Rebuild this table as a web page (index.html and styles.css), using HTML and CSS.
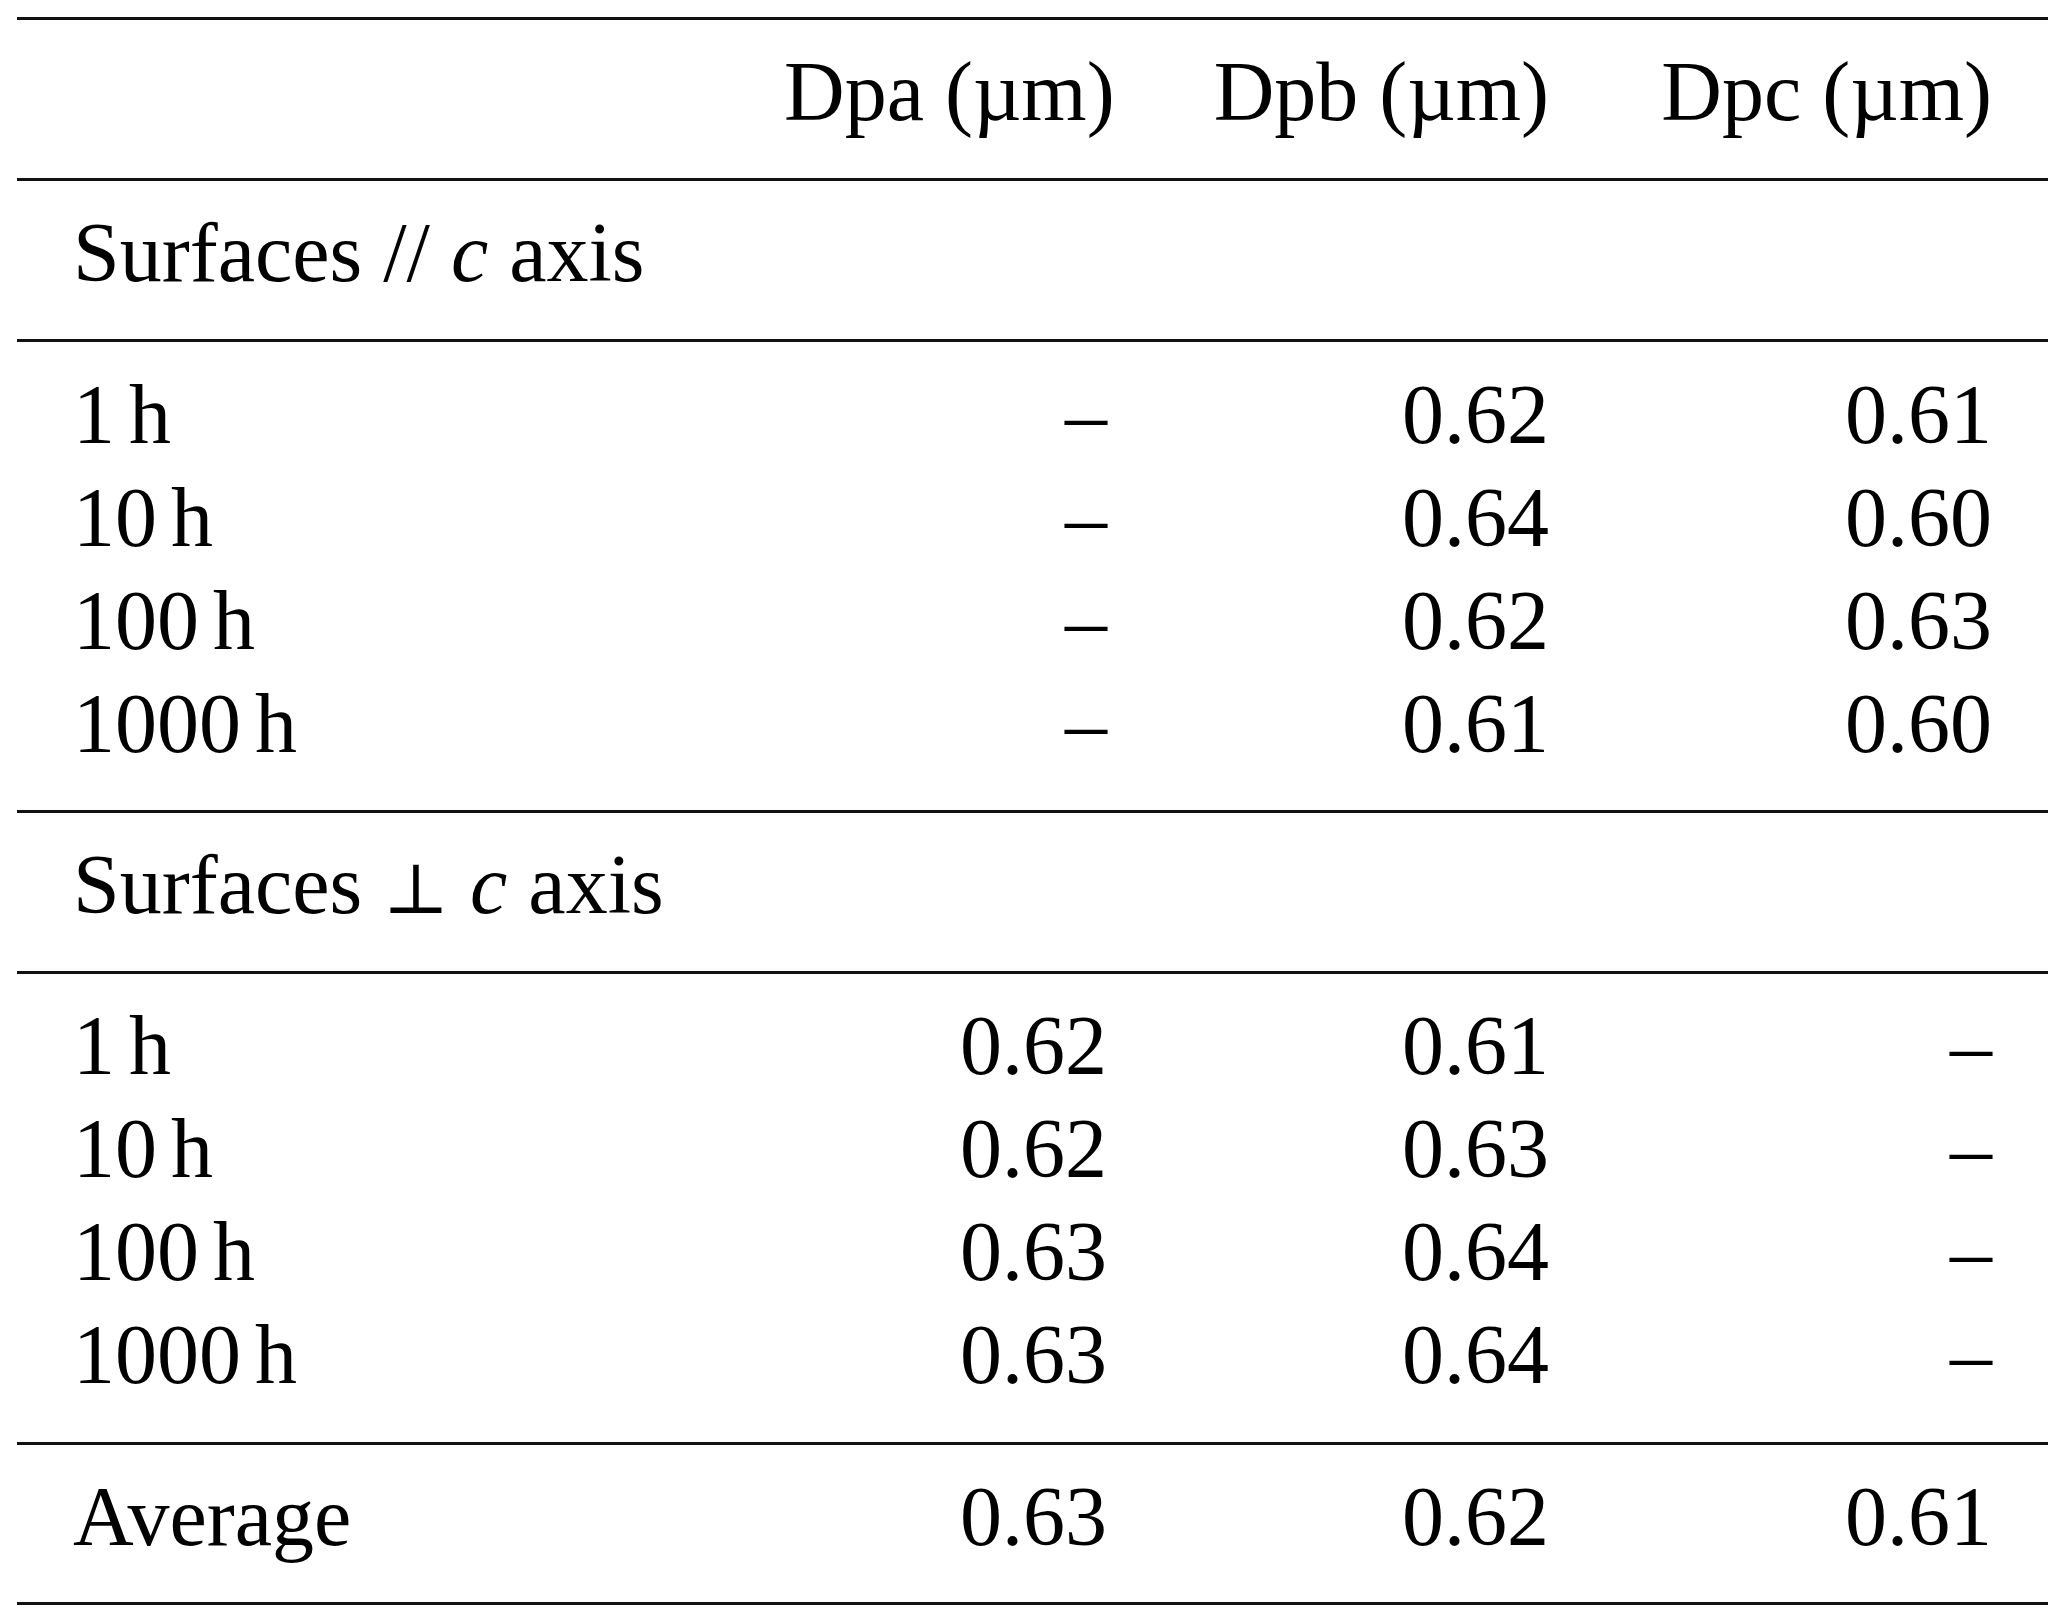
FILE: index.html
```html
<!DOCTYPE html>
<html lang="en">
<head>
<meta charset="utf-8">
<title>Table</title>
<link rel="stylesheet" href="styles.css">
</head>
<body>
<table class="data">
  <thead>
    <tr class="rule head">
      <th class="c1"></th>
      <th class="c2">Dpa (µm)</th>
      <th class="c3">Dpb (µm)</th>
      <th class="c4">Dpc (µm)</th>
    </tr>
  </thead>
  <tbody>
    <tr class="rule label">
      <td class="c1" colspan="4">Surfaces // <i>c</i> axis</td>
    </tr>
    <tr class="rule first g1">
      <td class="c1">1<span class="ts"></span>h</td><td class="num">–</td><td class="num">0.62</td><td class="num c4">0.61</td>
    </tr>
    <tr>
      <td class="c1">10<span class="ts"></span>h</td><td class="num">–</td><td class="num">0.64</td><td class="num c4">0.60</td>
    </tr>
    <tr>
      <td class="c1">100<span class="ts"></span>h</td><td class="num">–</td><td class="num">0.62</td><td class="num c4">0.63</td>
    </tr>
    <tr class="last g1">
      <td class="c1">1000<span class="ts"></span>h</td><td class="num">–</td><td class="num">0.61</td><td class="num c4">0.60</td>
    </tr>
    <tr class="rule label">
      <td class="c1" colspan="4">Surfaces <span class="perp">⊥</span> <i>c</i> axis</td>
    </tr>
    <tr class="rule first g2">
      <td class="c1">1<span class="ts"></span>h</td><td class="num">0.62</td><td class="num">0.61</td><td class="num c4">–</td>
    </tr>
    <tr>
      <td class="c1">10<span class="ts"></span>h</td><td class="num">0.62</td><td class="num">0.63</td><td class="num c4">–</td>
    </tr>
    <tr>
      <td class="c1">100<span class="ts"></span>h</td><td class="num">0.63</td><td class="num">0.64</td><td class="num c4">–</td>
    </tr>
    <tr class="last g2">
      <td class="c1">1000<span class="ts"></span>h</td><td class="num">0.63</td><td class="num">0.64</td><td class="num c4">–</td>
    </tr>
    <tr class="rule avg">
      <td class="c1">Average</td><td class="num">0.63</td><td class="num">0.62</td><td class="num c4">0.61</td>
    </tr>
  </tbody>
</table>
</body>
</html>
```

FILE: styles.css
```css
html, body {
  margin: 0;
  padding: 0;
  background: #ffffff;
}

body {
  font-family: "Liberation Serif", "Times New Roman", serif;
  font-size: 84px;
  color: #000000;
}

.data {
  margin: 17px 0 0 17px;
  width: 2031px;
  table-layout: fixed;
  border-collapse: separate;
  border-spacing: 0;
}

.data th,
.data td {
  box-sizing: border-box;
  padding: 0;
  line-height: 103px;
  font-weight: normal;
  white-space: nowrap;
  text-align: right;
  vertical-align: baseline;
}

.data .c1 {
  text-align: left;
  padding-left: 56px;
}

.data .c4 {
  padding-right: 56px;
}

.data th.c1 { width: 767px; }
.data th.c2 { width: 323px; }
.data th.c3 { width: 442px; }
.data th.c4 { width: 499px; }

.rule > th,
.rule > td {
  border-top: 3px solid #111111;
}

.head > th,
.label > td {
  padding-top: 20px;
  padding-bottom: 35px;
}

.first.g1 > td {
  padding-top: 21px;
}

.last.g1 > td {
  padding-bottom: 35px;
}

.first.g2 > td {
  padding-top: 20px;
}

.last.g2 > td {
  padding-bottom: 36px;
}

.avg > td {
  padding-top: 20px;
  padding-bottom: 34px;
  border-bottom: 3px solid #111111;
}

.ts {
  display: inline-block;
  width: 14px;
}

.perp {
  font-family: "DejaVu Serif", serif;
  font-size: 70px;
  line-height: 0;
}
```
